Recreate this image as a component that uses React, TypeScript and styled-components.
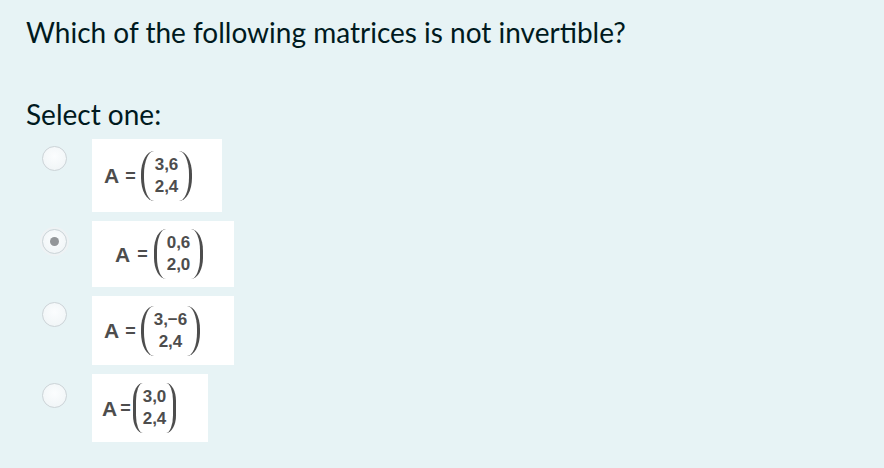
import styled, { createGlobalStyle } from "styled-components";

const GlobalStyle = createGlobalStyle`
  html, body {
    margin: 0;
    padding: 0;
    background: #e7f3f5;
  }
  body {
    font-family: Lato, "Noto Sans", sans-serif;
    color: #001a1e;
  }
`;

const Page = styled.div`
  width: 884px;
  height: 468px;
  box-sizing: border-box;
  padding: 14px 0 0 26px;
  background: #e7f3f5;
  overflow: hidden;
`;

const Question = styled.div`
  font-size: 28px;
  line-height: 36px;
  margin: 0;
`;

const Prompt = styled.div`
  font-size: 28px;
  line-height: 36px;
  margin-top: 46px;
`;

const Answers = styled.div`
  display: flex;
  flex-direction: column;
  gap: 9px;
  margin-top: 7px;
`;

const Option = styled.label`
  display: flex;
  align-items: flex-start;
`;

const Radio = styled.span<{ $checked?: boolean; $top: number }>`
  box-sizing: border-box;
  width: 25px;
  height: 25px;
  margin: ${(p) => p.$top}px 0 0 16px;
  border-radius: 50%;
  border: 1px solid #ccd3d7;
  background: radial-gradient(circle at 50% 40%, #fbfdfe, #eef3f5);
  box-shadow: ${(p) => (p.$checked ? "0 0 0 2px #eef2f4" : "none")};
  display: flex;
  align-items: center;
  justify-content: center;
  flex-shrink: 0;
  &::after {
    content: "";
    display: ${(p) => (p.$checked ? "block" : "none")};
    width: 9px;
    height: 9px;
    border-radius: 50%;
    background: #939699;
  }
`;

const Card = styled.div<{ $w: number; $h: number; $pl: number }>`
  box-sizing: border-box;
  width: ${(p) => p.$w}px;
  height: ${(p) => p.$h}px;
  margin-left: 25px;
  padding-left: ${(p) => p.$pl}px;
  background: #ffffff;
  display: flex;
  align-items: center;
  font-family: "Liberation Sans", Arial, sans-serif;
  font-weight: 700;
  color: #4d4d4d;
`;

const Letter = styled.span`
  font-size: 21px;
  line-height: 1;
`;

const Equals = styled.span<{ $gap: number }>`
  font-size: 18px;
  line-height: 1;
  margin: 0 ${(p) => p.$gap}px 0 ${(p) => p.$gap + 1}px;
`;

const Paren = styled.span<{ $right?: boolean; $w: number }>`
  width: ${(p) => p.$w}px;
  height: 50px;
  box-sizing: border-box;
  flex-shrink: 0;
  border-style: solid;
  border-color: #4d4d4d;
  border-width: ${(p) => (p.$right ? "0 3px 0 0" : "0 0 0 3px")};
  border-radius: ${(p) =>
    p.$right ? "0 14px 14px 0 / 0 25px 25px 0" : "14px 0 0 14px / 25px 0 0 25px"};
`;

const Stack = styled.span<{ $pad: number }>`
  display: flex;
  flex-direction: column;
  align-items: center;
  font-size: 17px;
  line-height: 22px;
  padding: 0 ${(p) => p.$pad}px;
`;

type Item = {
  top: string;
  bottom: string;
  w: number;
  h: number;
  pl: number;
  gap: number;
  paren: number;
  pad: number;
  radioTop: number;
  checked?: boolean;
};

const items: Item[] = [
  { top: "3,6", bottom: "2,4", w: 130, h: 73, pl: 12, gap: 5, paren: 13, pad: 1, radioTop: 7 },
  { top: "0,6", bottom: "2,0", w: 142, h: 66, pl: 23, gap: 6, paren: 12, pad: 1, radioTop: 8, checked: true },
  { top: "3,\u22126", bottom: "2,4", w: 142, h: 69, pl: 12, gap: 5, paren: 13, pad: 0, radioTop: 6 },
  { top: "3,0", bottom: "2,4", w: 116, h: 68, pl: 10, gap: 2, paren: 10, pad: 0, radioTop: 9 },
];

const Matrix = ({ item }: { item: Item }) => (
  <Card $w={item.w} $h={item.h} $pl={item.pl}>
    <Letter>A</Letter>
    <Equals $gap={item.gap}>=</Equals>
    <Paren $w={item.paren} />
    <Stack $pad={item.pad}>
      <span>{item.top}</span>
      <span>{item.bottom}</span>
    </Stack>
    <Paren $right $w={item.paren} />
  </Card>
);

export default function App() {
  return (
    <>
      <GlobalStyle />
      <Page>
        <Question>Which of the following matrices is not invertible?</Question>
        <Prompt>Select one:</Prompt>
        <Answers>
          {items.map((item, i) => (
            <Option key={i}>
              <Radio $checked={item.checked} $top={item.radioTop} />
              <Matrix item={item} />
            </Option>
          ))}
        </Answers>
      </Page>
    </>
  );
}
